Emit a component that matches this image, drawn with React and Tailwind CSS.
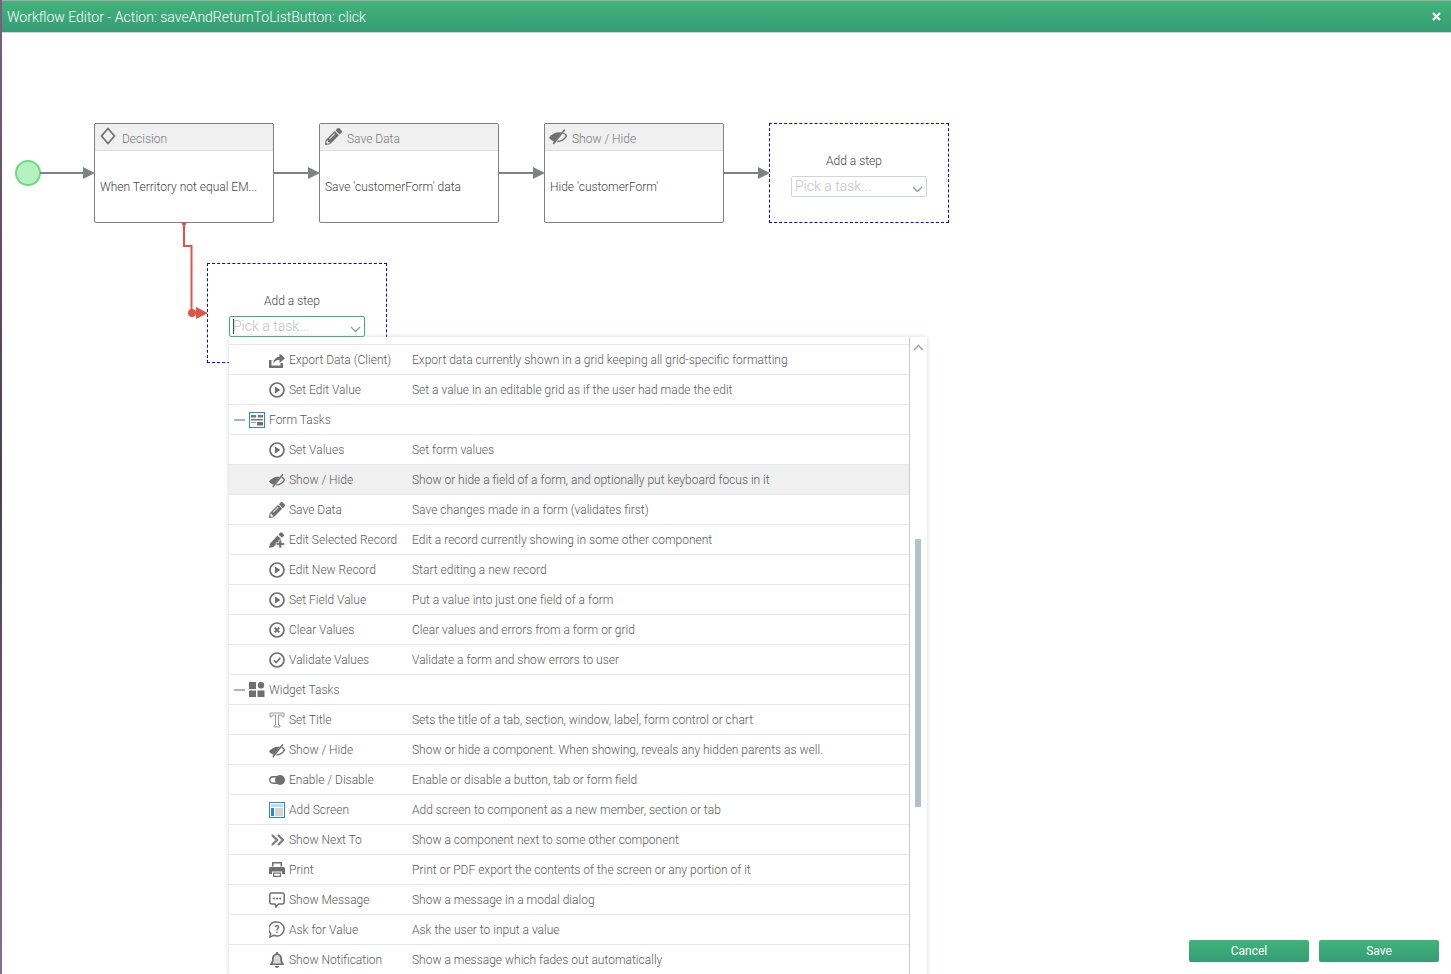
import { FaPencilAlt } from "react-icons/fa";

const Circle = ({ children }) => (
  <svg width="16" height="16" viewBox="0 0 16 16" fill="none" stroke="#6f6f6f">
    <circle cx="8" cy="8" r="7" strokeWidth="1.7" />
    {children}
  </svg>
);
const PlayIcon = () => <Circle><path d="M6 4.600v6.800L11.400 8z" fill="#6f6f6f" stroke="none" /></Circle>;
const ClearIcon = () => <Circle><path d="M5.600 5.600l4.800 4.800M10.400 5.600l-4.800 4.800" strokeWidth="2" /></Circle>;
const CheckIcon = () => <Circle><path d="M4.800 8.200l2.300 2.300 4.200-4.600" strokeWidth="1.600" /></Circle>;

const Hide = ({ size = 16 }) => (
  <svg width={size} height={size} viewBox="0 0 16 16" fill="none">
    <path d="M0 9.500C2.500 6 6.500 4.200 11 4.800L4.800 12.800C2.800 12.300 1.200 11.200 0 9.500z" fill="#6f6f6f" />
    <path d="M12.800 5.400c1.200.6 2.200 1.500 2.800 2.400-2 3.200-5 5-8.300 5" stroke="#6f6f6f" strokeWidth="1.300" />
    <path d="M3.800 15L14 2.200" stroke="#6f6f6f" strokeWidth="1.500" />
  </svg>
);
const Pencil = ({ size = 16 }) => <FaPencilAlt size={size} color="#6f6f6f" />;

const ExportIcon = () => (
  <svg width="16" height="16" viewBox="0 0 16 16" fill="#6f6f6f">
    <path d="M0 8h2.500v5.500h9V11H14v5H0z" />
    <path d="M4.500 11.500C4.500 7.500 7 5 10.500 4.800V1.500L16 6.200 10.500 11V7.800C8 7.800 6 9 4.500 11.500z" />
  </svg>
);

const EditRecord = () => (
  <svg width="16" height="16" viewBox="0 0 16 16" fill="#6f6f6f">
    <path d="M0 16l1-4.500 7.500-8 3.500 3.500-7.500 8zM9.500 2.500L11.400.6a1 1 0 011.400 0l2 2a1 1 0 010 1.400L13 5.800z" />
    <path d="M10 8h2.600v2.700H15.500v2.600h-2.900V16H10v-2.700H7.200v-2.600H10z" stroke="#fff" strokeWidth=".6" />
  </svg>
);

const TitleIcon = () => (
  <svg width="16" height="16" viewBox="0 0 16 16" fill="#fff" stroke="#9a9a9a" strokeWidth="1">
    <path d="M1 1h14v4h-1.500l-1-2H9.500v10l1.500.6V15H5v-1.400l1.500-.6V3H3.500l-1 2H1z" />
  </svg>
);

const ToggleIcon = () => (
  <svg width="16" height="10" viewBox="0 0 16 10" fill="none">
    <rect x=".8" y="1.800" width="13" height="6.400" rx="3.200" stroke="#6f6f6f" strokeWidth="1.400" />
    <circle cx="11" cy="5" r="5" fill="#6f6f6f" />
  </svg>
);

const ScreenIcon = () => (
  <svg width="16" height="16" viewBox="0 0 16 16">
    <rect x=".5" y=".5" width="15" height="15" fill="#fff" stroke="#2b87d1" />
    <rect x="2" y="2" width="12" height="3" fill="#bcdcf5" />
    <rect x="2" y="6" width="3" height="8" fill="#2b87d1" />
    <rect x="6" y="6" width="8" height="8" fill="#d4d4d4" />
  </svg>
);

const NextIcon = () => (
  <svg width="13" height="12" viewBox="0 0 13 12" fill="none" stroke="#7d7d7d" strokeWidth="2.400">
    <path d="M1 1l5 5-5 5M7 1l5 5-5 5" />
  </svg>
);

const PrintIcon = () => (
  <svg width="16" height="15" viewBox="0 0 16 15" fill="#6f6f6f">
    <path d="M3 0h10v4.500h-1.500V1.500h-7v3H3z" />
    <path d="M1.500 5h13A1.500 1.500 0 0116 6.500V12h-3V9.500H3V12H0V6.500A1.500 1.500 0 011.500 5z" />
    <path d="M4 10.500h8V15H4z" />
    <path d="M5.200 11.700h5.600v2.100H5.200z" fill="#fff" />
  </svg>
);

const MessageIcon = () => (
  <svg width="16" height="16" viewBox="0 0 16 16" fill="#6f6f6f">
    <path d="M2.500 1h11A1.700 1.700 0 0115.200 2.700v7.600A1.700 1.700 0 0113.500 12H9.500L7 15l-1-3H2.500A1.700 1.700 0 01.8 10.300V2.700A1.700 1.700 0 012.500 1z" fill="none" stroke="#6f6f6f" strokeWidth="1.500" />
    <circle cx="4.800" cy="6.500" r="1.100" />
    <circle cx="8" cy="6.500" r="1.100" />
    <circle cx="11.200" cy="6.500" r="1.100" />
  </svg>
);

const AskIcon = () => (
  <svg width="16" height="17" viewBox="0 0 16 17" fill="none" stroke="#6f6f6f">
    <path d="M8 1a7 7 0 11-3 13.300L1 16l.6-3.500A7 7 0 018 1z" strokeWidth="1.500" />
    <text x="8" y="12" textAnchor="middle" fontSize="10" fontWeight="700" fontFamily="Roboto, sans-serif" fill="#6f6f6f" stroke="none">?</text>
  </svg>
);

const BellIcon = () => (
  <svg width="14" height="16" viewBox="0 0 14 16" fill="#6f6f6f">
    <path d="M7 0a1.200 1.200 0 011.200 1.400C10.500 2 12 4 12 6.500c0 3.200.8 4.300 2 5.500v1H0v-1c1.200-1.200 2-2.300 2-5.500C2 4 3.500 2 5.800 1.400A1.200 1.200 0 017 0z" />
    <path d="M7 3c-1.900 0-3.200 1.500-3.200 3.500 0 2.500-.4 3.800-1.200 5h8.800c-.8-1.200-1.200-2.500-1.200-5C10.200 4.500 8.900 3 7 3z" fill="#d9d9d9" />
    <path d="M5 14h4a2 2 0 01-4 0z" />
  </svg>
);

const FormIcon = () => (
  <svg width="16" height="16" viewBox="0 0 16 16">
    <rect x=".5" y=".5" width="15" height="15" fill="#fff" stroke="#2b87d1" />
    <path d="M2 3h5v2.500H2zM9 3h5v2.500H9zM2 7h12v1.500H2z" fill="#7b7b7b" />
    <path d="M8 10h6v3.500H8z" fill="#6f6f6f" />
    <path d="M2 10h5v1H2z" fill="#9a9a9a" />
  </svg>
);

const WidgetIcon = () => (
  <svg width="16" height="15" viewBox="0 0 16 15" fill="#6f6f6f">
    <rect x="0" y="0" width="7" height="7" />
    <circle cx="12" cy="3.200" r="3.200" />
    <rect x="0" y="8.500" width="7" height="6.500" />
    <rect x="8.500" y="8.500" width="7" height="6.500" />
  </svg>
);

const Diamond = () => (
  <svg width="16" height="18" viewBox="0 0 16 18" fill="none" stroke="#6f6f6f" strokeWidth="1.700">
    <path d="M8 1.500L14.500 9 8 16.500 1.500 9z" />
  </svg>
);

const rows = [
  { icon: <ExportIcon />, label: "Export Data (Client)", desc: "Export data currently shown in a grid keeping all grid-specific formatting" },
  { icon: <PlayIcon />, label: "Set Edit Value", desc: "Set a value in an editable grid as if the user had made the edit" },
  { group: true, icon: <FormIcon />, label: "Form Tasks" },
  { icon: <PlayIcon />, label: "Set Values", desc: "Set form values" },
  { icon: <Hide />, label: "Show / Hide", desc: "Show or hide a field of a form, and optionally put keyboard focus in it", active: true },
  { icon: <Pencil />, label: "Save Data", desc: "Save changes made in a form (validates first)" },
  { icon: <EditRecord />, label: "Edit Selected Record", desc: "Edit a record currently showing in some other component" },
  { icon: <PlayIcon />, label: "Edit New Record", desc: "Start editing a new record" },
  { icon: <PlayIcon />, label: "Set Field Value", desc: "Put a value into just one field of a form" },
  { icon: <ClearIcon />, label: "Clear Values", desc: "Clear values and errors from a form or grid" },
  { icon: <CheckIcon />, label: "Validate Values", desc: "Validate a form and show errors to user" },
  { group: true, icon: <WidgetIcon />, label: "Widget Tasks" },
  { icon: <TitleIcon />, label: "Set Title", desc: "Sets the title of a tab, section, window, label, form control or chart" },
  { icon: <Hide />, label: "Show / Hide", desc: "Show or hide a component. When showing, reveals any hidden parents as well." },
  { icon: <ToggleIcon />, label: "Enable / Disable", desc: "Enable or disable a button, tab or form field" },
  { icon: <ScreenIcon />, label: "Add Screen", desc: "Add screen to component as a new member, section or tab" },
  { icon: <NextIcon />, label: "Show Next To", desc: "Show a component next to some other component" },
  { icon: <PrintIcon />, label: "Print", desc: "Print or PDF export the contents of the screen or any portion of it" },
  { icon: <MessageIcon />, label: "Show Message", desc: "Show a message in a modal dialog" },
  { icon: <AskIcon />, label: "Ask for Value", desc: "Ask the user to input a value" },
  { icon: <BellIcon />, label: "Show Notification", desc: "Show a message which fades out automatically" },
];

const Caret = ({ color = "#8d9cab", size = 11, up = false }) => (
  <svg width={size} height="7" viewBox="0 0 11 7" fill="none" stroke={color} strokeWidth="1.300">
    <path d={up ? "M1 6l4.500-4.500L10 6" : "M1 1l4.500 4.500L10 1"} />
  </svg>
);

const TaskNode = ({ left, icon, title, text }) => (
  <div className="absolute top-[90px] w-[180px] h-[100px] border border-[#808080] rounded-[2px] bg-white" style={{ left }}>
    <div className="h-[27px] bg-[#f0f0f0] border-b border-[#dedede] flex items-center pl-[4px] text-[12px] text-[#7a7a7a]">
      <span className="w-[18px] h-[18px] -mt-[2px] flex items-center justify-center mr-[5px]">{icon}</span>
      <span className="pt-[3px]">{title}</span>
    </div>
    <div className="h-[71px] flex items-center pl-[5px] text-[12px] text-[#444]">{text}</div>
  </div>
);

const AddStep = ({ left, top, focused }) => (
  <div className="absolute w-[180px] h-[100px] border border-dashed border-[#0000ff] bg-white flex flex-col items-center pt-[29px]" style={{ left, top }}>
    <div className="text-[12px] leading-[16px] text-[#444] pr-[10px]">Add a step</div>
    <div className={`mt-[7px] w-[136px] h-[21px] border rounded-[2px] flex items-center justify-between pl-[3px] pr-[3px] bg-white text-[14px] text-[#c4c4c4] ${focused ? "border-[#3dae78]" : "border-[#cdd5dd]"}`}>
      <span className="flex items-center">
        {focused && <span className="w-px h-[15px] bg-[#444] -mr-px" />}
        Pick a task...
      </span>
      <span className="pt-[5px]"><Caret /></span>
    </div>
  </div>
);

const Row = ({ row }) => (
  <div className={`h-[30px] shrink-0 border-b border-[#e6e8ea] flex items-center text-[12px] text-[#5a5a5a] ${row.active ? "bg-[#f0f0f0]" : ""}`}>
    {row.group ? (
      <>
        <span className="ml-[5px] w-[11px] h-[2px] bg-[#a9b4bf]" />
        <span className="ml-[4px] w-[16px] flex justify-center">{row.icon}</span>
        <span className="ml-[4px]">{row.label}</span>
      </>
    ) : (
      <>
        <span className="ml-[40px] w-[16px] h-[17px] flex items-center justify-center">{row.icon}</span>
        <span className="ml-[4px] w-[123px] whitespace-nowrap">{row.label}</span>
        <span className="whitespace-nowrap">{row.desc}</span>
      </>
    )}
  </div>
);

export default function App() {
  return (
    <div className="w-[1451px] h-[974px] overflow-hidden bg-white flex font-['Roboto',sans-serif] font-light">
      <div className="w-[2px] shrink-0 bg-gradient-to-b from-[#7a5f85] via-[#4a4050] to-[#8a6f8a]" />

      <div className="relative flex-1 flex flex-col min-w-0">
        <div className="h-[33px] shrink-0 border-t border-t-[#a8a8a8] border-b border-b-[#d5d5d5] bg-gradient-to-b from-[#41b47a] to-[#369c74] flex items-center justify-between pl-[5px] pr-[10px] text-white">
          <span className="text-[14px] font-light pt-[1px]">Workflow Editor - Action: saveAndReturnToListButton: click</span>
          <svg width="9" height="9" viewBox="0 0 9 9" stroke="#fff" strokeWidth="2.200"><path d="M1 1l7 7M8 1L1 8" /></svg>
        </div>

        <div className="relative flex-1">
          <svg className="absolute -left-[2px] top-0" width="1000" height="340" viewBox="0 33 1000 340" fill="none">
            <circle cx="28" cy="173" r="12" fill="#b5f2c0" stroke="#6bdc7d" strokeWidth="2" />
            <g stroke="#7b8485" strokeWidth="2">
              <path d="M40 173h45M274 173h36M499 173h36M724 173h36" />
            </g>
            <g fill="#7b8485">
              <path d="M83 167l12 6-12 6zM308 167l12 6-12 6zM533 167l12 6-12 6zM758 167l12 6-12 6z" />
            </g>
            <path d="M184 223v23h7.500v67" stroke="#e05644" strokeWidth="2" />
            <path d="M181.500 223h5l-1 2.500h-3z" fill="#e05644" />
            <circle cx="192" cy="313" r="4" fill="#e05644" />
            <path d="M196 307l12 6-12 6z" fill="#e05644" />
          </svg>

          <div className="absolute -left-[2px] top-0">
            <TaskNode left={94} icon={<Diamond />} title="Decision" text="When Territory not equal EM..." />
            <TaskNode left={319} icon={<Pencil size={17} />} title="Save Data" text="Save 'customerForm' data" />
            <TaskNode left={544} icon={<Hide size={18} />} title="Show / Hide" text="Hide 'customerForm'" />
            <AddStep left={769} top={90} />
            <AddStep left={207} top={230} focused />
          </div>

          <div className="absolute left-[227px] top-[304px] w-[698px] h-[640px] bg-white flex shadow-[0_0_5px_rgba(150,170,195,0.45)] overflow-hidden">
            <div className="w-[681px] border-r border-[#cccccc] flex flex-col">
              <div className="h-[8px] shrink-0 border-b border-[#e6e8ea]" />
              {rows.map((row, i) => <Row key={i} row={row} />)}
            </div>
            <div className="relative w-[17px]">
              <div className="flex justify-center pt-[7px] pr-[1px]"><Caret up size={11} /></div>
              <div className="absolute left-[5px] top-[202px] w-[6px] h-[268px] bg-[#b4c1cb]" />
            </div>
          </div>
        </div>

        <div className="absolute right-[12px] bottom-[12px] flex gap-[10px]">
          <button className="w-[120px] h-[22px] rounded-[2px] bg-gradient-to-b from-[#41b47a] to-[#369c74] text-white text-[12px] font-normal">Cancel</button>
          <button className="w-[120px] h-[22px] rounded-[2px] bg-gradient-to-b from-[#41b47a] to-[#369c74] text-white text-[12px] font-normal">Save</button>
        </div>
      </div>
    </div>
  );
}
